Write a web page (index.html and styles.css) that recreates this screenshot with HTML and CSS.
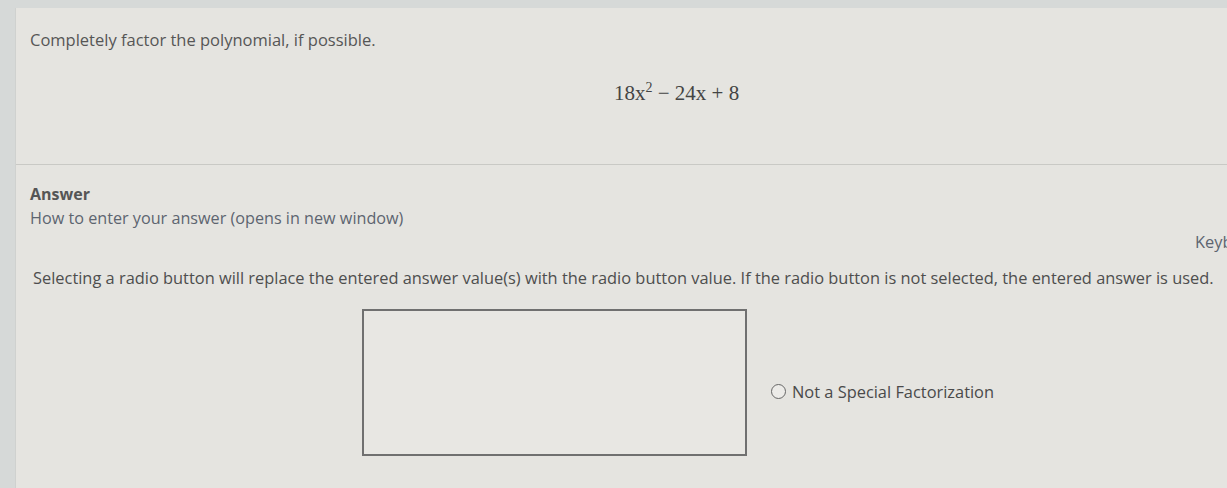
FILE: index.html
```
<!DOCTYPE html>
<html lang="en">
<head>
    <meta charset="UTF-8">
    <title>Factor the polynomial</title>
    <link rel="stylesheet" href="styles.css">
</head>
<body>
    <div class="frame">
        <div class="panel">
            <section class="question">
                <p class="prompt">Completely factor the polynomial, if possible.</p>
                <p class="math">18x<sup>2</sup> &minus; 24x + 8</p>
            </section>
            <section class="answer">
                <h2>Answer</h2>
                <a class="help" href="#">How to enter your answer (opens in new window)</a>
                <div class="keyboard">Keyboard Shortcuts</div>
                <p class="notice">Selecting a radio button will replace the entered answer value(s) with the radio button value. If the radio button is not selected, the entered answer is used.</p>
                <div class="entry">
                    <div class="answer-box"></div>
                    <label class="choice">
                        <span class="radio"></span>
                        Not a Special Factorization
                    </label>
                </div>
            </section>
        </div>
    </div>
</body>
</html>
```

FILE: styles.css
```
* {
    box-sizing: border-box;
    margin: 0;
    padding: 0;
}

html, body {
    height: 100%;
    overflow: hidden;
}

body {
    font-family: "Open Sans", Arial, sans-serif;
    color: #555;
    background-color: #d6d9d8;
}

.frame {
    padding: 8px 0 0 15px;
    height: 100%;
}

.panel {
    height: 100%;
    background-color: #e5e4e0;
    border-left: 1px solid #cfd1cf;
}

.question {
    padding: 21px 0 0 14px;
    height: 157px;
    border-bottom: 1px solid #c9c9c5;
}

.prompt {
    font-size: 16.5px;
    line-height: 22px;
    color: #565656;
}

.math {
    font-family: "Liberation Serif", "Times New Roman", serif;
    font-size: 21px;
    line-height: 26px;
    color: #444;
    margin-top: 29px;
    padding-left: 584px;
}

.math sup {
    font-size: 14px;
    vertical-align: 8px;
    line-height: 0;
}

.answer {
    padding: 18px 0 0 14px;
}

.answer h2 {
    font-size: 16px;
    font-weight: 700;
    color: #555;
    line-height: 22px;
}

.help {
    display: block;
    font-size: 16.2px;
    color: #5d6570;
    text-decoration: none;
    line-height: 22px;
    margin-top: 2px;
}

.keyboard {
    font-size: 16.4px;
    color: #5d6570;
    white-space: nowrap;
    margin: 2px 0 0 1165px;
    line-height: 22px;
}

.notice {
    font-size: 16.4px;
    color: #4e4e4e;
    white-space: nowrap;
    margin: 14px 0 0 3px;
    line-height: 22px;
}

.entry {
    display: flex;
    align-items: center;
    gap: 24px;
    margin: 20px 0 0 332px;
}

.answer-box {
    width: 385px;
    height: 147px;
    border: 2px solid #707070;
    background-color: #e8e7e3;
}

.choice {
    display: flex;
    align-items: center;
    gap: 6px;
    padding-top: 17px;
    font-size: 16.4px;
    color: #4a4a4a;
}

.radio {
    width: 15px;
    height: 15px;
    border: 1.5px solid #666;
    border-radius: 50%;
    background-color: #ecebe8;
}
```
